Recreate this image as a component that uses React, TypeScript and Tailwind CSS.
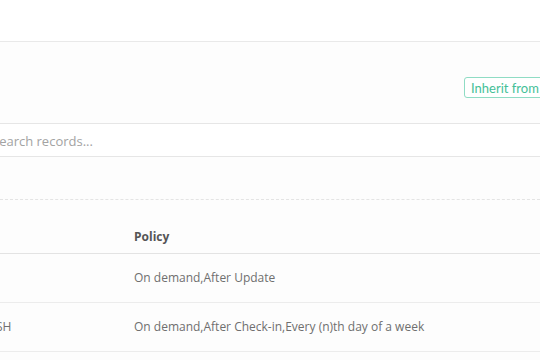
const rows = [
  { name: "", policy: "On demand,After Update" },
  { name: "PUSH", policy: "On demand,After Check-in,Every (n)th day of a week" },
];

function App() {
  return (
    <div className="h-[360px] w-[540px] overflow-hidden bg-[#fdfdfd] font-['Open_Sans',sans-serif]">
      <div className="h-[42px] border-b border-[#e9e9e9] bg-white" />

      <div className="flex h-[81px] justify-end pt-[35px]">
        <button className="-mr-[46px] h-[21px] w-[122px] whitespace-nowrap rounded-[3px] border-[1.5px] border-[#8fdcc4] bg-white pl-[6px] text-left font-['Lato',sans-serif] text-[13px] leading-[18px] text-[#45bf98]">
          Inherit from
        </button>
      </div>

      <div className="flex h-[34px] items-center border-y border-[#e6e6e6] bg-white">
        <input
          className="-ml-[8px] mt-[3px] w-full bg-transparent text-[13px] text-[#333] outline-none placeholder:text-[#a3a3a3]"
          placeholder="Search records..."
        />
      </div>

      <div className="h-[42px]" />

      <div className="border-t border-dashed border-[#e4e4e4]">
        <div className="grid h-[54px] grid-cols-[134px_1fr] items-end border-b border-[#e3e3e3] pb-[7px]">
          <div />
          <div className="text-[12px] font-bold text-[#555]">Policy</div>
        </div>
        {rows.map((row, i) => (
          <div
            key={i}
            className="grid h-[49px] grid-cols-[134px_1fr] items-center border-b border-[#ececec] text-[12px] text-[#6f6f6f]"
          >
            <div className="-ml-[20px] whitespace-nowrap">{row.name}</div>
            <div className="whitespace-nowrap">{row.policy}</div>
          </div>
        ))}
      </div>
    </div>
  );
}

export default App;
